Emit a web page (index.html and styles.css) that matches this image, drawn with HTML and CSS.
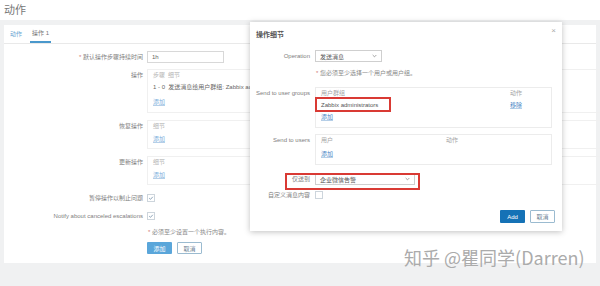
FILE: index.html
```html
<!DOCTYPE html>
<html lang="zh">
<head>
    <meta charset="UTF-8">
    <meta name="viewport" content="width=device-width, initial-scale=1.0">
    <title>动作</title>
    <link rel="stylesheet" href="styles.css">
</head>
<body>
    <!-- Page Header -->
    <header class="page-header">
        <h1>动作</h1>
    </header>

    <!-- Action Form -->
    <section class="panel">
        <nav class="tabs">
            <a class="tab">动作</a>
            <a class="tab active">操作 1</a>
        </nav>

        <div class="form">
            <div class="row row-duration">
                <div class="lbl"><span class="req">*</span> 默认操作步骤持续时间</div>
                <div class="val"><div class="text-input">1h</div></div>
            </div>

            <div class="row row-ops">
                <div class="lbl lbl-box">操作</div>
                <div class="val">
                    <div class="op-box">
                        <div class="op-head"><span>步骤</span><span>细节</span></div>
                        <div class="op-line">1 - 0 &nbsp;发送消息给用户群组: Zabbix administrators 通过 所有介质</div>
                        <a class="link">添加</a>
                    </div>
                </div>
            </div>

            <div class="row row-recovery">
                <div class="lbl lbl-box">恢复操作</div>
                <div class="val">
                    <div class="op-box small">
                        <div class="op-head"><span>细节</span></div>
                        <a class="link">添加</a>
                    </div>
                </div>
            </div>

            <div class="row row-update">
                <div class="lbl lbl-box">更新操作</div>
                <div class="val">
                    <div class="op-box small">
                        <div class="op-head"><span>细节</span></div>
                        <a class="link">添加</a>
                    </div>
                </div>
            </div>

            <div class="row row-check first">
                <div class="lbl">暂停操作以制止问题</div>
                <div class="val"><span class="checkbox checked"><svg viewBox="0 0 8 8"><polyline points="1.6,4.2 3.3,5.8 6.4,2.4"/></svg></span></div>
            </div>

            <div class="row row-check">
                <div class="lbl">Notify about canceled escalations</div>
                <div class="val"><span class="checkbox checked"><svg viewBox="0 0 8 8"><polyline points="1.6,4.2 3.3,5.8 6.4,2.4"/></svg></span></div>
            </div>

            <div class="row row-hint">
                <div class="lbl"></div>
                <div class="val hint"><span class="req">*</span> 必须至少设置一个执行内容。</div>
            </div>

            <div class="row row-buttons">
                <div class="lbl"></div>
                <div class="val buttons">
                    <button class="btn btn-primary">添加</button>
                    <button class="btn btn-alt">取消</button>
                </div>
            </div>
        </div>
    </section>

    <!-- Operation Details Dialog -->
    <div class="dialog">
        <div class="dialog-title">操作细节</div>
        <span class="dialog-close">×</span>

        <div class="dform">
            <div class="drow drow-op">
                <div class="lbl">Operation</div>
                <div class="val">
                    <div class="select op-select">发送消息<svg class="chev" viewBox="0 0 6 4"><polyline points="0.8,0.8 3,3 5.2,0.8"/></svg></div>
                </div>
            </div>

            <div class="drow drow-hint">
                <div class="lbl"></div>
                <div class="val hint"><span class="req">*</span> 您必须至少选择一个用户或用户组。</div>
            </div>

            <div class="drow drow-groups">
                <div class="lbl lbl-box">Send to user groups</div>
                <div class="val">
                    <div class="list-box">
                        <div class="list-grid groups">
                            <span class="muted">用户群组</span><span class="muted">动作</span>
                            <span class="item">Zabbix administrators</span><a class="link">移除</a>
                        </div>
                        <a class="link">添加</a>
                    </div>
                </div>
            </div>

            <div class="drow drow-users">
                <div class="lbl lbl-box">Send to users</div>
                <div class="val">
                    <div class="list-box">
                        <div class="list-grid users">
                            <span class="muted">用户</span><span class="muted">动作</span>
                        </div>
                        <a class="link">添加</a>
                    </div>
                </div>
            </div>

            <div class="drow drow-media">
                <div class="lbl">仅送到</div>
                <div class="val">
                    <div class="select media-select">企业微信告警<svg class="chev" viewBox="0 0 6 4"><polyline points="0.8,0.8 3,3 5.2,0.8"/></svg></div>
                </div>
            </div>

            <div class="drow drow-custom">
                <div class="lbl">自定义消息内容</div>
                <div class="val"><span class="checkbox"></span></div>
            </div>
        </div>

        <div class="dialog-footer">
            <button class="btn btn-add">Add</button>
            <button class="btn btn-alt">取消</button>
        </div>

        <!-- Annotations -->
        <span class="mark mark-groups"></span>
        <span class="mark mark-media"></span>
    </div>

    <!-- Watermark -->
    <div class="watermark">知乎 @瞿同学(Darren)</div>
</body>
</html>
```

FILE: styles.css
```css
/* Global Styles */
body {
    margin: 0;
    padding: 0;
    background: #f0f1f2;
    font-family: 'Liberation Sans', 'Noto Sans CJK SC', sans-serif;
    font-size: 6px;
    color: #777;
}

a {
    cursor: pointer;
}

/* Page Header */
.page-header {
    background: #fff;
    height: 20px;
    padding-left: 4px;
}

.page-header h1 {
    margin: 0;
    font-size: 11px;
    font-weight: normal;
    line-height: 20px;
    color: #777;
}

/* Main Panel */
.panel {
    background: #fff;
    margin: 5px 4px 0;
    height: 238px;
}

.tabs {
    display: flex;
    gap: 8px;
    height: 18px;
    padding-left: 6px;
    border-bottom: 1px solid #e9e9e9;
}

.tab {
    line-height: 18px;
    color: #6aa6d2;
}

.tab.active {
    color: #777;
    padding: 0 2px;
    box-sizing: border-box;
    height: 18px;
    border-bottom: 2px solid #4a98cc;
    line-height: 17px;
}

/* Form Layout */
.form {
    padding-top: 7px;
}

.row {
    display: grid;
    grid-template-columns: 139px 1fr;
    column-gap: 4px;
}

.lbl {
    text-align: right;
    color: #808080;
    line-height: 12px;
    white-space: nowrap;
}

.lbl-box {
    line-height: 10px;
    padding-top: 1px;
}

.req {
    color: #d07a75;
}

.text-input {
    width: 77px;
    height: 12px;
    box-sizing: border-box;
    border: 1px solid #d8d8d8;
    padding-left: 4px;
    line-height: 10px;
    color: #666;
}

.row-ops {
    margin-top: 6px;
}

.row-recovery,
.row-update {
    margin-top: 7px;
}

.op-box {
    width: 470px;
    border: 1px solid #f0f0f0;
    padding: 0 5px 5px;
}

.op-box.small {
    padding-bottom: 4px;
}

.op-head {
    display: flex;
    gap: 3px;
    line-height: 10px;
    color: #b5b5b5;
}

.op-line {
    line-height: 14px;
    color: #666;
    white-space: nowrap;
}

.op-box .link {
    display: inline-block;
    line-height: 10px;
    margin-top: 3px;
}

.link {
    color: #4a88c6;
    text-decoration: underline;
    text-decoration-color: #b5cfe8;
}

.op-box .link {
    color: #7cb0dc;
}

/* Checkboxes */
.row-check {
    margin-top: 10px;
}

.row-check.first {
    margin-top: 9px;
}

.row-check .lbl {
    line-height: 8px;
}

.checkbox {
    display: block;
    width: 8px;
    height: 8px;
    box-sizing: border-box;
    border: 1px solid #cdd5dc;
    background: #fff;
}

.checkbox svg {
    display: block;
    width: 6px;
    height: 6px;
    fill: none;
    stroke: #6a87a2;
    stroke-width: 1;
}

.hint {
    line-height: 10px;
    color: #888;
    padding-left: 1px;
}

.row-hint {
    margin-top: 7px;
}

.row-buttons {
    margin-top: 5px;
}

.buttons {
    display: flex;
    gap: 5px;
}

/* Buttons */
.btn {
    font-family: inherit;
    font-size: 6px;
    width: 25px;
    height: 12px;
    padding: 0;
    border: 1px solid transparent;
    border-radius: 1px;
    cursor: pointer;
}

.btn-primary {
    background: #5aa6da;
    color: #fff;
}

.btn-alt {
    background: #fff;
    border-color: #9bbbd0;
    color: #6a8093;
}

.btn-add {
    background: #1572b6;
    color: #fff;
    height: 13px;
}

.dialog-footer .btn-alt {
    height: 13px;
}

/* Dialog */
.dialog {
    position: absolute;
    left: 250px;
    top: 22px;
    width: 312px;
    height: 209px;
    box-sizing: border-box;
    padding: 0 10px 0 6px;
    background: #fff;
    box-shadow: 0 1px 6px rgba(0, 0, 0, 0.25);
}

.dialog-title {
    line-height: 26px;
    font-size: 7px;
    font-weight: bold;
    color: #555;
}

.dialog-close {
    position: absolute;
    right: 6px;
    top: 4px;
    font-size: 8px;
    color: #aaa;
}

.drow {
    display: grid;
    grid-template-columns: 54px 1fr;
    column-gap: 5px;
}

.drow-op {
    margin-top: 2px;
}

.drow-hint {
    margin-top: 6px;
}

.drow-groups {
    margin-top: 9px;
}

.drow-users {
    margin-top: 6px;
}

.drow-media {
    margin-top: 8px;
}

.drow-custom {
    margin-top: 6px;
}

.drow-custom .lbl {
    line-height: 8px;
}

.select {
    display: flex;
    align-items: center;
    justify-content: space-between;
    height: 12px;
    box-sizing: border-box;
    border: 1px solid #cfcfcf;
    padding: 0 4px;
    color: #555;
}

.op-select {
    width: 67px;
}

.media-select {
    width: 100px;
}

.chev {
    width: 5px;
    height: 4px;
    fill: none;
    stroke: #777;
    stroke-width: 0.8;
}

.list-box {
    border: 1px solid #ececec;
    padding: 0 5px 5px;
}

.list-grid {
    display: grid;
    line-height: 10px;
}

.list-grid.groups {
    grid-template-columns: 1fr 36px;
}

.list-grid.groups .item,
.list-grid.groups .link {
    line-height: 14px;
}

.list-grid.users {
    grid-template-columns: 125px 1fr;
}

.muted {
    color: #a5a5a5;
}

.item {
    color: #555;
}

.list-box > .link {
    display: inline-block;
    line-height: 10px;
}

.drow-users .list-box > .link {
    margin-top: 4px;
}

.dialog-footer {
    display: flex;
    justify-content: flex-end;
    gap: 5px;
    margin-top: 11px;
    margin-right: -3px;
}

/* Red annotation marks */
.mark {
    position: absolute;
    border: 2px solid #d93a34;
    box-sizing: border-box;
}

.mark-groups {
    left: 65px;
    top: 75px;
    width: 76px;
    height: 15px;
}

.mark-media {
    left: 35px;
    top: 151px;
    width: 135px;
    height: 17px;
}

/* Watermark */
.watermark {
    position: absolute;
    left: 404px;
    top: 244px;
    font-family: 'Noto Sans CJK SC', sans-serif;
    font-size: 18px;
    color: #ababab;
    white-space: nowrap;
}
```
